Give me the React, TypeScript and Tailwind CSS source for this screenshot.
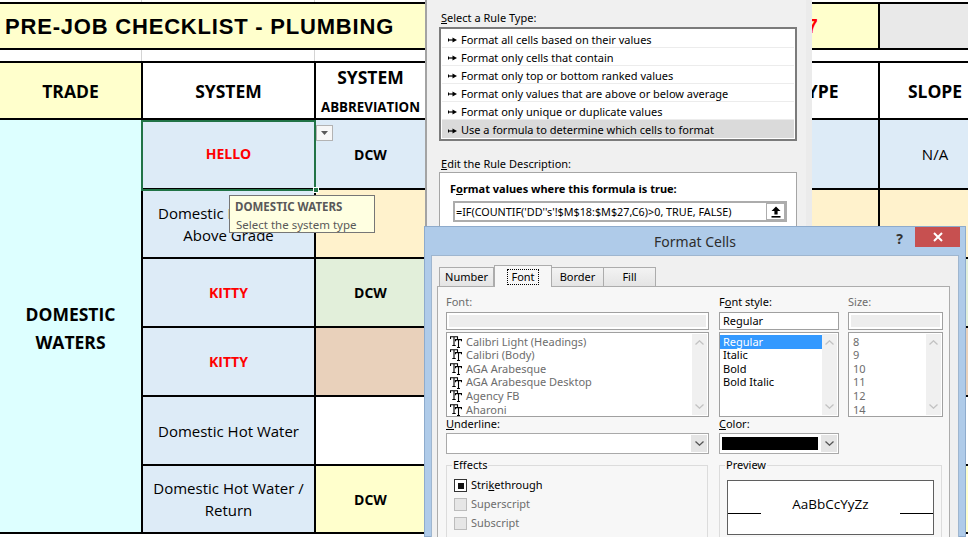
import React from 'react';

const ruleTypes = [
  'Format all cells based on their values',
  'Format only cells that contain',
  'Format only top or bottom ranked values',
  'Format only values that are above or below average',
  'Format only unique or duplicate values',
  'Use a formula to determine which cells to format',
];

const fonts = [
  'Calibri Light (Headings)',
  'Calibri (Body)',
  'AGA Arabesque',
  'AGA Arabesque Desktop',
  'Agency FB',
  'Aharoni',
];
const fontStyles = ['Regular', 'Italic', 'Bold', 'Bold Italic'];
const sizes = ['8', '9', '10', '11', '12', '14'];

const rows = [
  { system: 'HELLO', red: true, abbr: 'DCW', bg: 'bg-[#ddebf7]', slope: 'N/A' },
  { system: 'Domestic Hot Water Above Grade', red: false, abbr: '', bg: 'bg-[#fff2cc]', slope: '' },
  { system: 'KITTY', red: true, abbr: 'DCW', bg: 'bg-[#e2efda]', slope: '' },
  { system: 'KITTY', red: true, abbr: '', bg: 'bg-[#e9d1bb]', slope: '' },
  { system: 'Domestic Hot Water', red: false, abbr: '', bg: 'bg-white', slope: '' },
  { system: 'Domestic Hot Water / Return', red: false, abbr: 'DCW', bg: 'bg-[#ffffcc]', slope: '' },
];

function RuleArrow() {
  return (
    <svg width="9" height="6" viewBox="0 0 9 6" className="shrink-0">
      <path d="M0.5 1.5v3" stroke="#000" strokeWidth="1" />
      <path d="M0.5 3h5" stroke="#000" strokeWidth="1.2" />
      <path d="M4.5 0.5 9 3 4.5 5.5z" fill="#000" />
    </svg>
  );
}

function TTIcon() {
  return (
    <svg width="12" height="12" viewBox="0 0 12 12" className="shrink-0">
      <path d="M0.5 3V0.8h7V3M4 0.8v8.7M2.3 9.5h3.4" fill="none" stroke="#000" strokeWidth="1.1" />
      <path d="M5.5 5.2V3.6h6v1.6M8.5 3.6v7.9M7 11.5h3" fill="none" stroke="#000" strokeWidth="1.1" />
    </svg>
  );
}

function Chevron({ up = false, color = '#444' }: { up?: boolean; color?: string }) {
  return (
    <svg width="9" height="5" viewBox="0 0 9 5">
      <path
        d={up ? 'M0.5 4.5 4.5 0.8l4 3.7' : 'M0.5 0.5 4.5 4.2l4-3.7'}
        fill="none"
        stroke={color}
        strokeWidth="1.3"
      />
    </svg>
  );
}

function ScrollBar() {
  return (
    <div className="my-[1px] mr-[1px] flex w-[15px] shrink-0 flex-col items-center justify-between bg-[#f0f0f0] py-[6px]">
      <Chevron up color="#c2c2c2" />
      <Chevron color="#c2c2c2" />
    </div>
  );
}

function Cell({ className = '', children }: { className?: string; children?: React.ReactNode }) {
  return <div className={`flex items-center justify-center text-center ${className}`}>{children}</div>;
}

function Sheet() {
  return (
    <div className="flex flex-col font-['Open_Sans',sans-serif] text-black">
      <div className="flex h-[2px]">
        <div className="w-[142px] border-r border-[#d4d4d4]" />
        <div className="w-[173px] border-r border-[#d4d4d4]" />
      </div>
      <div className="h-[2px] bg-black" />
      <div className="flex h-[44px]">
        <div className="flex w-[878px] items-center justify-between bg-[#ffffcc] pl-[5px] pr-[60px] font-['Liberation_Sans',Arial,sans-serif] font-bold">
          <span className="text-[22px] tracking-[0.8px]">PRE-JOB CHECKLIST - PLUMBING</span>
          <span className="text-[20px] text-[#ff0000]">REV. 7</span>
        </div>
        <div className="w-[2px] bg-black" />
        <div className="flex-1 bg-[#e9e9e9]" />
      </div>
      <div className="h-[2px] bg-black" />
      <div className="flex h-[11px]">
        <div className="w-[142px] border-r border-[#d4d4d4]" />
        <div className="w-[173px] border-r border-[#d4d4d4]" />
      </div>
      <div className="h-[2px] bg-black" />
      <div className="grid grid-cols-[141px_171px_109px_273px_176px_110px] grid-rows-[55px_68px_67px_67px_67px_67px_66px] gap-[2px] bg-black pb-[2px]">
        <Cell className="bg-[#ffffcc] pt-[2px] text-[17.5px] font-bold">TRADE</Cell>
        <Cell className="bg-white pt-[2px] text-[17.5px] font-bold">SYSTEM</Cell>
        <div className="flex flex-col items-center bg-white pt-[3px] font-bold">
          <span className="text-[17.5px] leading-[22px]">SYSTEM</span>
          <span className="mt-[8px] text-[13.3px] leading-[22px]">ABBREVIATION</span>
        </div>
        <Cell className="bg-white" />
        <Cell className="bg-white pl-[13px] pt-[2px] text-[17.5px] font-bold">PIPE TYPE</Cell>
        <Cell className="bg-white pt-[2px] text-[17.5px] font-bold">SLOPE</Cell>

        <Cell className="row-span-6 bg-[#ddffff] pt-[4px] text-[17.5px] font-bold leading-[28px]">
          DOMESTIC WATERS
        </Cell>
        {rows.map((r, i) => (
          <React.Fragment key={i}>
            <Cell
              className={`bg-[#ddebf7] px-[6px] leading-[22px] ${
                r.red ? 'text-[14px] font-bold text-[#ff0000]' : 'text-[15px]'
              }`}
            >
              {r.system}
            </Cell>
            <Cell className={`${r.bg} text-[14px] font-bold`}>{r.abbr}</Cell>
            <Cell className={r.bg} />
            <Cell className={r.bg} />
            <Cell className={`${r.bg} text-[15px]`}>{r.slope}</Cell>
          </React.Fragment>
        ))}
      </div>
    </div>
  );
}

function RuleDialog() {
  return (
    <div className="absolute left-[425px] top-0 h-[227px] w-[387px] border-l-2 border-r-[6px] border-l-[#a3a3a3] border-r-[#ebebeb] bg-[#f0f0f0] pl-[12px] font-['Noto_Sans',sans-serif] text-[11px] text-black">
      <div className="mt-[10px] pl-[2px] leading-[16px]">
        <span className="underline">S</span>elect a Rule Type:
      </div>
      <div className="mt-[1px] h-[114px] w-[358px] border-2 border-[#7b7b7b] bg-white p-[1px]">
        {ruleTypes.map((t, i) => (
          <div
            key={t}
            className={`flex h-[18px] items-center gap-[4px] pl-[6px] pt-[3px] ${
              i === 5 ? 'bg-[#dadada]' : 'border-b border-[#ececec]'
            }`}
          >
            <RuleArrow />
            <span>{t}</span>
          </div>
        ))}
      </div>
      <div className="mt-[14px] pl-[2px] pt-[1px] leading-[16px]">
        <span className="underline">E</span>dit the Rule Description:
      </div>
      <div className="h-[60px] w-[358px] border border-[#a5a5a5] bg-white pl-[10px] pt-[8px]">
        <div className="font-bold leading-[16px]">
          F<span className="underline">o</span>rmat values where this formula is true:
        </div>
        <div className="ml-[3px] mt-[4px] flex h-[21px] w-[334px] items-center border-2 border-[#acacac] pl-[1px]">
          <span className="flex-1 whitespace-nowrap pt-[1px] text-[10.8px]">
            =IF(COUNTIF('DD''s'!$M$18:$M$27,C6)&gt;0, TRUE, FALSE)
          </span>
          <div className="flex h-[17px] w-[19px] items-center justify-center border border-[#adadad] bg-white">
            <svg width="10" height="12" viewBox="0 0 10 12">
              <path d="M5 0.5 9.5 5H6.6v3.6H3.4V5H0.5z" fill="#000" />
              <rect x="0.5" y="10" width="9" height="1.6" fill="#000" />
            </svg>
          </div>
        </div>
      </div>
    </div>
  );
}

function Combo({ children }: { children?: React.ReactNode }) {
  return (
    <div className="mt-[2px] flex h-[21px] border border-[#a9a9a9] bg-white">
      <div className="flex flex-1 items-start">{children}</div>
      <div className="mr-[1px] mt-[1px] flex h-[17px] w-[16px] items-center justify-center bg-[#e5e5e5]">
        <Chevron color="#555" />
      </div>
    </div>
  );
}

function CheckRow({ label, checked, disabled }: { label: React.ReactNode; checked?: boolean; disabled?: boolean }) {
  return (
    <div className="flex h-[19px] items-center gap-[4px]">
      <div
        className={`flex h-[13px] w-[13px] items-center justify-center border ${
          disabled ? 'border-[#bcbcbc] bg-[#e6e6e6]' : 'border-[#333] bg-white'
        }`}
      >
        {checked && <div className="h-[6px] w-[6px] bg-[#111]" />}
      </div>
      <span className={disabled ? 'text-[#6d6d6d]' : 'text-black'}>{label}</span>
    </div>
  );
}

function FormatCells() {
  return (
    <div className="absolute left-[424px] top-[226px] h-[311px] w-[542px] border border-[#8eabcc] bg-[#afcbe9] px-[6px] font-['Noto_Sans',sans-serif] text-[11px] text-black">
      <div className="grid h-[28px] grid-cols-[1fr_auto_1fr]">
        <div />
        <div className="flex items-center text-[14px] text-[#2d2d2d]">Format Cells</div>
        <div className="-mr-[1px] flex items-start justify-end gap-[12px]">
          <span className="mt-[1px] text-[14px] font-bold text-[#333]">?</span>
          <div className="flex h-[20px] w-[45px] items-center justify-center bg-[#c75050]">
            <svg width="10" height="10" viewBox="0 0 10 10">
              <path d="M1 1l8 8M9 1 1 9" stroke="#fff" strokeWidth="2" />
            </svg>
          </div>
        </div>
      </div>

      <div className="h-[283px] border border-[#9fb6cf] bg-[#f0f0f0] pt-[9px]">
        <div className="ml-[7px] flex h-[21px] items-end">
          <div className="flex h-[19px] w-[55px] items-center justify-center border border-b-0 border-[#acacac] bg-linear-to-b from-[#f3f3f3] to-[#e4e4e4]">
            Number
          </div>
          <div className="relative z-10 -mb-[1px] flex h-[22px] w-[58px] items-center justify-center border border-b-0 border-[#acacac] bg-[#f7f7f7]">
            <span className="border border-dotted border-black px-[3px] leading-[14px]">Font</span>
          </div>
          <div className="flex h-[19px] w-[52px] items-center justify-center border border-b-0 border-l-0 border-[#acacac] bg-linear-to-b from-[#f3f3f3] to-[#e4e4e4]">
            Border
          </div>
          <div className="flex h-[19px] w-[52px] items-center justify-center border border-b-0 border-l-0 border-[#acacac] bg-linear-to-b from-[#f3f3f3] to-[#e4e4e4]">
            Fill
          </div>
        </div>

        <div className="ml-[5px] h-[260px] w-[513px] border border-[#acacac] bg-[#f7f7f7] pl-[8px] pt-[7px]">
          <div className="flex">
            <div className="w-[263px]">
              <div className="h-[16px] leading-[16px] text-[#6d6d6d]">Font:</div>
              <div className="mt-[2px] h-[18px] border border-[#a0a0a0] bg-white p-[2px]">
                <div className="h-full bg-[#ededed]" />
              </div>
              <div className="mt-[2px] flex h-[85px] border border-[#a0a0a0] bg-white">
                <div className="flex-1 pl-[3px] pt-[2px]">
                  {fonts.map((f) => (
                    <div key={f} className="flex h-[13.6px] items-center gap-[4px] text-[#6d6d6d]">
                      <TTIcon />
                      <span>{f}</span>
                    </div>
                  ))}
                </div>
                <ScrollBar />
              </div>
            </div>

            <div className="ml-[10px] w-[120px]">
              <div className="h-[16px] leading-[16px]">
                F<span className="underline">o</span>nt style:
              </div>
              <div className="mt-[2px] flex h-[18px] items-center border border-[#a0a0a0] bg-white pl-[3px]">
                Regular
              </div>
              <div className="mt-[2px] flex h-[85px] border border-[#a0a0a0] bg-white">
                <div className="flex-1 pt-[2px]">
                  {fontStyles.map((s, i) => (
                    <div
                      key={s}
                      className={`flex h-[13.6px] items-center pl-[3px] ${
                        i === 0 ? 'bg-[#3399ff] text-white' : 'text-black'
                      }`}
                    >
                      {s}
                    </div>
                  ))}
                </div>
                <ScrollBar />
              </div>
            </div>

            <div className="ml-[9px] w-[95px]">
              <div className="h-[16px] leading-[16px] text-[#6d6d6d]">Size:</div>
              <div className="mt-[2px] h-[18px] border border-[#a0a0a0] bg-white p-[2px]">
                <div className="h-full bg-[#ededed]" />
              </div>
              <div className="mt-[2px] flex h-[85px] border border-[#a0a0a0] bg-white">
                <div className="flex-1 pl-[4px] pt-[2px]">
                  {sizes.map((s) => (
                    <div key={s} className="flex h-[13.6px] items-center text-[#6d6d6d]">
                      {s}
                    </div>
                  ))}
                </div>
                <ScrollBar />
              </div>
            </div>
          </div>

          <div className="flex">
            <div className="w-[263px]">
              <div className="leading-[14px]">
                <span className="underline">U</span>nderline:
              </div>
              <Combo />
            </div>
            <div className="ml-[10px] w-[120px]">
              <div className="leading-[14px]">
                <span className="underline">C</span>olor:
              </div>
              <Combo>
                <div className="ml-[2px] mt-[3px] h-[13px] w-[96px] bg-black" />
              </Combo>
            </div>
          </div>

          <div className="mt-[4px] flex">
            <fieldset className="h-[100px] w-[262px] border border-[#dcdcdc]">
              <legend className="ml-[5px] px-[1px] leading-[14px]">Effects</legend>
              <div className="pl-[7px] pt-[4px]">
                <CheckRow
                  checked
                  label={
                    <>
                      Stri<span className="underline">k</span>ethrough
                    </>
                  }
                />
                <CheckRow disabled label="Superscript" />
                <CheckRow disabled label="Subscript" />
              </div>
            </fieldset>
            <fieldset className="ml-[11px] h-[100px] w-[223px] border border-[#dcdcdc]">
              <legend className="ml-[5px] px-[1px] leading-[14px]">Preview</legend>
              <div className="pl-[7px] pt-[8px]">
                <div className="flex h-[55px] w-[207px] items-center border-[1.5px] border-[#5f5f5f] bg-white">
                  <div className="mt-[11px] h-[1px] w-[33px] bg-black" />
                  <span className="mb-[7px] flex-1 text-center font-['Open_Sans',sans-serif] text-[13.5px]">
                    AaBbCcYyZz
                  </span>
                  <div className="mt-[11px] h-[1px] w-[33px] bg-black" />
                </div>
              </div>
            </fieldset>
          </div>
        </div>
      </div>
    </div>
  );
}

export default function App() {
  return (
    <div className="relative h-[537px] w-[968px] overflow-hidden bg-white">
      <Sheet />

      {/* active cell */}
      <div className="absolute left-[141px] top-[120px] h-[71px] w-[175px] border-2 border-[#217346]" />
      <div className="absolute left-[313px] top-[187px] h-[6px] w-[6px] border border-white bg-[#217346]" />
      <div className="absolute left-[316px] top-[125px] flex h-[16px] w-[17px] items-center justify-center border border-[#b3b3b3] bg-[#f7f7f7]">
        <svg width="7" height="4" viewBox="0 0 7 4">
          <path d="M0 0h7L3.5 4z" fill="#595959" />
        </svg>
      </div>

      {/* validation tooltip */}
      <div className="absolute left-[229px] top-[195px] h-[38px] w-[146px] border border-[#767676] bg-[#ffffe1] pl-[5px] pt-[2px] font-['Noto_Sans',sans-serif] text-[11.5px] text-[#595959]">
        <div className="font-bold leading-[18px]">DOMESTIC WATERS</div>
        <div className="pl-[1px] leading-[18px]">Select the system type</div>
      </div>

      <RuleDialog />
      <FormatCells />
    </div>
  );
}
